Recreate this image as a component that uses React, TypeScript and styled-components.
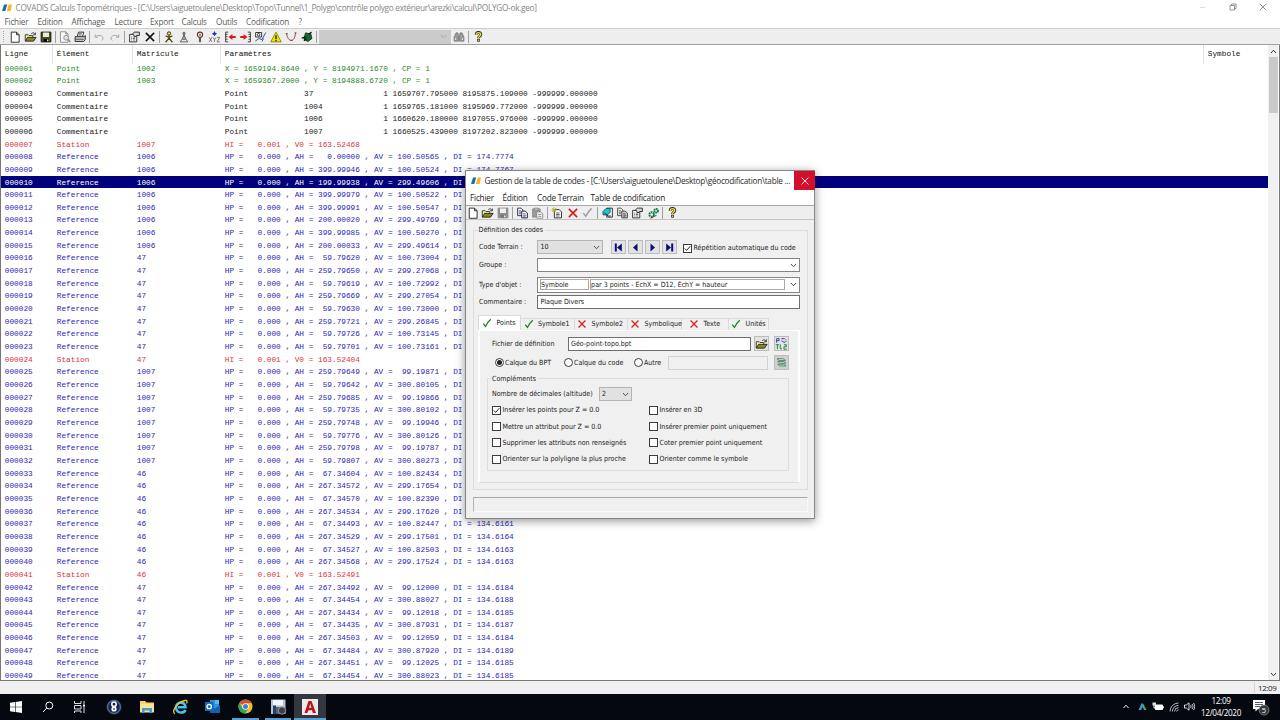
import React from "react";
import styled, { createGlobalStyle, css } from "styled-components";

const ui = `"Open Sans", "Noto Sans", sans-serif`;
const tahoma = `"DejaVu Sans Condensed", "DejaVu Sans", sans-serif`;

const GlobalStyle = createGlobalStyle`
  * { box-sizing: border-box; }
  body { margin: 0; background: #fff; overflow: hidden; }
  svg { display: block; flex: none; }
`;

const Screen = styled.div`
  width: 1280px;
  height: 720px;
  display: flex;
  flex-direction: column;
  position: relative;
  overflow: hidden;
  background: #fff;
  font-family: ${ui};
  white-space: nowrap;
`;

const TitleBar = styled.header`
  display: flex;
  align-items: center;
  height: 15px;
  padding-left: 2px;
  color: #858585;
  font-size: 8.3px;
`;
const TitleText = styled.span<{ $ls?: number }>`
  flex: 1;
  min-width: 0;
  padding-left: 3.5px;
  letter-spacing: ${(p) => p.$ls ?? 0}px;
`;
const WindowButtons = styled.div`
  display: flex;
  gap: 22px;
  padding-right: 13px;
  margin-top: -2px;
`;

const MenuBar = styled.nav<{ $dialog?: boolean }>`
  display: flex;
  align-items: center;
  gap: 9.5px;
  flex: none;
  height: ${(p) => (p.$dialog ? 15 : 13)}px;
  padding-left: ${(p) => (p.$dialog ? 4 : 4.5)}px;
  font-size: 8.2px;
  color: ${(p) => (p.$dialog ? "#222" : "#5a5a5a")};
  background: #fff;
`;
const MenuItem = styled.span<{ $w: number; $ls?: number }>`
  width: ${(p) => p.$w}px;
  letter-spacing: ${(p) => p.$ls ?? -0.2}px;
`;

const Toolbar = styled.div<{ $dialog?: boolean }>`
  display: flex;
  align-items: center;
  flex: none;
  height: ${(p) => (p.$dialog ? 15 : 17)}px;
  padding-left: ${(p) => (p.$dialog ? 0 : 3)}px;
  background: #eeeeee;
  border-top: 1px solid ${(p) => (p.$dialog ? "#a8a8a8" : "#cfcfcf")};
  border-bottom: 1px solid ${(p) => (p.$dialog ? "#c4c4c4" : "#a0a0a0")};
  ${(p) => p.$dialog && css`> :first-child { margin-left: -1px; }`}
`;
const Gripper = styled.span`
  width: 1px;
  height: 11px;
  margin-right: 3.3px;
  border-left: 1px dotted #aaa;
`;
const ToolCell = styled.span`
  width: 15.3px;
  display: flex;
  justify-content: center;
`;
const ToolSep = styled.span`
  width: 4.1px;
  height: 12px;
  display: flex;
  justify-content: center;
  &::before { content: ""; width: 1px; background: #a0a0a0; }
`;
const ToolCombo = styled.span`
  width: 132.5px;
  height: 14px;
  margin-left: 0.5px;
  display: flex;
  align-items: center;
  justify-content: flex-end;
  padding-right: 4px;
  background: #cbcbcb;
`;

const ListArea = styled.main`
  flex: 1;
  display: flex;
  min-height: 0;
  border-left: 1px solid #777;
  border-right: 1px solid #777;
  border-bottom: 1px solid #777;
`;
const ListTable = styled.div`
  flex: 1;
  overflow: hidden;
  font-family: "Liberation Mono", "Courier New", monospace;
  font-size: 7.78px;
`;
const lineGrid = css`
  display: grid;
  grid-template-columns: 52px 80px 88px 983px 1fr;
`;
const HeaderRow = styled.div`
  ${lineGrid}
  height: 16.6px;
  color: #111;
`;
const HeaderCell = styled.span`
  padding-left: 3.8px;
  line-height: 18.6px;
  border-right: 1px solid #e2e2e2;
  &:last-child { border-right: none; }
`;
type Kind = "point" | "comment" | "station" | "ref";
const kindColor: Record<Kind, string> = {
  point: "#2a8a2c",
  comment: "#222222",
  station: "#e0343c",
  ref: "#2c26bc",
};
const DataRow = styled.div<{ $kind: Kind; $selected: boolean }>`
  ${lineGrid}
  height: 12.667px;
  line-height: 14.2px;
  color: ${(p) => (p.$selected ? "#ffffff" : kindColor[p.$kind])};
  background: ${(p) => (p.$selected ? "#00007c" : "transparent")};
`;
const DataCell = styled.span`
  padding-left: 3.8px;
  white-space: pre;
`;

const ScrollTrack = styled.div`
  width: 10px;
  margin-right: 1px;
  background: #f0f0f0;
  display: flex;
  flex-direction: column;
  align-items: center;
`;
const ScrollArrow = styled.span`
  height: 12px;
  display: flex;
  align-items: center;
`;
const ScrollThumb = styled.span`
  width: 9px;
  height: 56px;
  margin-bottom: auto;
  background: #cacaca;
`;

const StatusBar = styled.footer`
  flex: none;
  height: 12.5px;
  display: flex;
  justify-content: flex-end;
  align-items: center;
  background: #f0f0f0;
  font-size: 8px;
  color: #222;
`;
const StatusClock = styled.span`
  width: 26px;
  padding-left: 3px;
  border-left: 1px solid #d5d5d5;
  letter-spacing: -0.4px;
  line-height: 11px;
`;

const Taskbar = styled.div`
  flex: none;
  height: 26.5px;
  display: flex;
  background: #05080f;
  color: #fff;
`;
const TaskItem = styled.div<{ $running?: boolean; $active?: boolean; $w?: number }>`
  width: ${(p) => p.$w ?? 32.7}px;
  display: flex;
  align-items: center;
  justify-content: center;
  background: ${(p) => (p.$active ? "#33373f" : "transparent")};
  ${(p) =>
    (p.$running || p.$active) &&
    css`
      border-bottom: 2px solid #5a9fd0;
      padding-top: 2px;
    `}
  ${(p) => p.$running && !p.$active && css`margin: 0 3px; width: 26.7px;`}
`;
const Tray = styled.div`
  margin-left: auto;
  display: flex;
  align-items: center;
`;
const TrayCell = styled.span<{ $w: number }>`
  width: ${(p) => p.$w}px;
  display: flex;
  justify-content: center;
`;
const TrayClock = styled.div`
  width: 48px;
  text-align: center;
  font-size: 8.2px;
  line-height: 12px;
  letter-spacing: -0.35px;
`;

/* ---- dialog ---- */
const Dialog = styled.section`
  position: absolute;
  left: 465px;
  top: 170px;
  width: 350px;
  height: 348.5px;
  display: flex;
  flex-direction: column;
  background: #f0f0f0;
  border: 1px solid #858585;
  border-right-color: #8a8a8a;
  box-shadow: 0 2px 9px rgba(0, 0, 0, 0.42);
  color: #1c1c1c;
`;
const DialogTitle = styled.header`
  flex: none;
  height: 19px;
  display: flex;
  align-items: center;
  padding-left: 5px;
  background: #fff;
  font-size: 8.2px;
  color: #2a2a2a;
`;
const CloseButton = styled.span`
  flex: none;
  width: 21px;
  height: 19px;
  margin-right: -1px;
  display: flex;
  align-items: center;
  justify-content: center;
  background: #d2102c;
`;
const Body = styled.div`
  flex: 1;
  padding: 9.5px 6px 0 7px;
  font-family: ${tahoma};
  font-size: 7.05px;
  line-height: 10px;
`;
const Group = styled.div<{ $h: number }>`
  height: ${(p) => p.$h}px;
  border: 1px solid #dcdcdc;
`;
const Rows = styled.div<{ $left: number; $shift?: number }>`
  display: flex;
  flex-direction: column;
  padding-left: ${(p) => p.$left}px;
  margin-top: ${(p) => p.$shift ?? 0}px;
`;
const Legend = styled.div`
  width: max-content;
  margin: -5.5px 0 0 3.5px;
  padding: 0 2px 0 1px;
  height: 10px;
  background: #f0f0f0;
`;
const Row = styled.div<{ $h: number; $mt?: number }>`
  display: flex;
  align-items: center;
  height: ${(p) => p.$h}px;
  margin-top: ${(p) => p.$mt ?? 0}px;
`;
const Label = styled.label<{ $w?: number; $ls?: number }>`
  flex: none;
  width: ${(p) => (p.$w ? `${p.$w}px` : "auto")};
  letter-spacing: ${(p) => p.$ls ?? 0}px;
`;
const Select = styled.span<{ $w: number; $grey?: boolean }>`
  flex: none;
  width: ${(p) => p.$w}px;
  height: 14px;
  display: flex;
  align-items: center;
  justify-content: space-between;
  padding: 0 2px 0 2.5px;
  background: ${(p) => (p.$grey ? "#e1e1e1" : "#fff")};
  border: 1px solid ${(p) => (p.$grey ? "#b4b4b4" : "#858585")};
`;
const TypeCombo = styled.span`
  width: 262.5px;
  height: 16px;
  display: flex;
  align-items: center;
  gap: 1.5px;
  padding: 0 2px;
  background: #fff;
  border: 1px solid #858585;
`;
const TypePart = styled.span<{ $w: number }>`
  width: ${(p) => p.$w}px;
  height: 11px;
  line-height: 9px;
  border: 1px solid #a9a9a9;
`;
const TextInput = styled.span<{ $w: number; $off?: boolean }>`
  flex: none;
  width: ${(p) => p.$w}px;
  height: 14px;
  padding-left: 2.5px;
  line-height: 12px;
  background: ${(p) => (p.$off ? "#f0f0f0" : "#fff")};
  border: 1px solid ${(p) => (p.$off ? "#d2d2d2" : "#6f6f6f")};
`;
const SmallButton = styled.span<{ $ml: number; $dark?: boolean }>`
  flex: none;
  width: 15px;
  height: 14.5px;
  margin-left: ${(p) => p.$ml}px;
  display: flex;
  align-items: center;
  justify-content: center;
  background: ${(p) => (p.$dark ? "#cfcfcf" : "#e3e3e3")};
  border: 1px solid ${(p) => (p.$dark ? "#bdbdbd" : "#bcbcbc")};
`;
const Box = styled.span`
  flex: none;
  width: 9px;
  height: 9px;
  margin-right: 1.5px;
  display: flex;
  align-items: center;
  justify-content: center;
  border: 1px solid #3c3c3c;
  background: #fff;
`;
const Radio = styled(Box)<{ $on?: boolean }>`
  border-radius: 50%;
  &::before {
    content: "";
    width: 5px;
    height: 5px;
    border-radius: 50%;
    background: ${(p) => (p.$on ? "#222" : "transparent")};
  }
`;
const TabStrip = styled.div`
  display: flex;
  align-items: flex-end;
  height: 15px;
`;
const Tab = styled.div<{ $w: number; $pl: number; $gap: number; $active?: boolean }>`
  flex: none;
  width: ${(p) => p.$w}px;
  height: ${(p) => (p.$active ? 15 : 12.5)}px;
  padding-left: ${(p) => p.$pl}px;
  display: flex;
  align-items: center;
  gap: ${(p) => p.$gap}px;
  background: ${(p) => (p.$active ? "#fff" : "#f0f0f0")};
  border: 1px solid #dadada;
  border-bottom: none;
  border-left-width: ${(p) => (p.$active ? 1 : 0)}px;
`;
const TabPanel = styled.div`
  width: 322px;
  height: 153px;
  padding: 5px 9px 0 7px;
  border: 1px solid #dcdcdc;
  border-left: 2px solid #fff;
  border-right: 2px solid #fff;
  border-top: 1px solid #fff;
`;
const CheckGrid = styled.div`
  display: grid;
  grid-template-columns: 157px 1fr;
  grid-auto-rows: 16.25px;
  margin-top: 1px;
`;
const Check = styled.span`
  display: flex;
  align-items: center;
`;
const MessageStrip = styled.div`
  height: 15px;
  margin-top: 7px;
  border: 1px solid #fafafa;
  border-top-color: #a8a8a8;
  border-left-color: #b4b4b4;
`;

/* ---- icons ---- */
const Ico = ({ children, w = 12, h = 12, vb = "0 0 16 16" }: { children: React.ReactNode; w?: number; h?: number; vb?: string }) => (
  <svg width={w} height={h} viewBox={vb} fill="none" stroke="#222" strokeWidth="1.2">
    {children}
  </svg>
);
const AppLogo = () => (
  <svg width="10" height="8" viewBox="0 0 10 8">
    <path d="M2 0.5h3.3L3.3 7H0z" fill="#1a6fb4" />
    <path d="M6.800 0.500H10L8.600 7H4.800z" fill="#f4b81d" />
  </svg>
);
const Chevron = ({ up = false, c = "#555", w = 7 }: { up?: boolean; c?: string; w?: number }) => (
  <svg width={w} height="5" viewBox="0 0 7 5" fill="none" stroke={c} strokeWidth="1">
    <path d={up ? "M1 4L3.5 1.2L6 4" : "M1 1L3.5 3.8L6 1"} />
  </svg>
);
const NewIcon = () => (
  <Ico><path d="M3 1.5h7l3.5 3.5v10H3z" fill="#fff" /><path d="M10 1.5V5h3.5" /></Ico>
);
const OpenIcon = () => (
  <Ico w={13}>
    <path d="M1 13V5h4l1 1h5v3" fill="#f6ef9a" stroke="#333" />
    <path d="M1 13.5L4 8.5h11.5L12 13.5z" fill="#8b8b1c" stroke="#222" />
    <path d="M9 3.5c2-2 4-1 4.7.8M14.5 2v3h-3" strokeWidth="1.1" />
  </Ico>
);
const SaveIcon = ({ off = false }: { off?: boolean }) => (
  <Ico>
    <path d="M1.5 1.5h13v13h-13z" fill={off ? "#8c8c8c" : "#4e520f"} stroke={off ? "#8c8c8c" : "#111"} />
    <path d="M4 2h8v6H4z" fill={off ? "#f0f0f0" : "#e8e8e8"} stroke="none" />
    <path d="M5 10.5h7v4H5z" fill={off ? "#777" : "#000"} stroke="none" />
    <path d="M9.5 11.2h1.8v2.6H9.5z" fill="#fff" stroke="none" />
  </Ico>
);
const PreviewIcon = () => (
  <Ico><g stroke="#8c8c8c"><path d="M2 1h7l3 3v11H2z" fill="#f8f8f8" /><path d="M9 1v3h3" /><circle cx="9.5" cy="9" r="3.2" fill="#e4e4e4" /><path d="M12 11.5l3.2 3.2" strokeWidth="2" /></g></Ico>
);
const PrintIcon = () => (
  <Ico><path d="M4.5 7l1.500-5.500h7L11.500 7" fill="#fff" /><path d="M1.500 7.500h12.500l1-1.500v5.500l-2 2.500H1.500z" fill="#c9c9c9" /><path d="M2 11h11M6.500 3.700h4M6 5.400h4" strokeWidth="0.900" /></Ico>
);
const UndoIcon = ({ flip = false }: { flip?: boolean }) => (
  <Ico w={11} h={11}><g stroke="#a2a2a2" strokeWidth="1.3" transform={flip ? "translate(16 0) scale(-1 1)" : undefined}><path d="M2 8.500C5 6 10 5.500 12.500 8.500c1.500 2.300.3 4.500-1.500 5.200M1.800 5v4h4" /></g></Ico>
);
const PropsIcon = () => (
  <Ico w={13}><path d="M1.5 4.5h9.500v10H1.5z" fill="#fff" /><path d="M3.500 8h1.500M6 8h3M3.500 10h1.500M6 10h3M3.500 12h1.500M6 12h3" strokeWidth=".9" /><path d="M5.500 3.500L8 1.500h6.500v4.500H11L8.500 8z" fill="#d9d9d9" /></Ico>
);
const CrossIcon = ({ c = "#111", s = 12, sw = 2 }: { c?: string; s?: number; sw?: number }) => (
  <Ico w={s} h={s}><path d="M2.500 2.500L13.500 13.500M13.500 2.500L2.500 13.500" stroke={c} strokeWidth={sw} /></Ico>
);
const ManIcon = () => (
  <Ico><circle cx="8" cy="3.300" r="2.200" fill="#f2e93b" /><path d="M8 5.500v4L3.500 15M8 9.500L12.500 15M3.500 6.500L8 8.500l4.500-2" stroke="#4b4a00" strokeWidth="1.700" /></Ico>
);
const StationIcon = () => (
  <Ico><path d="M8 3v8M5.500 11l-2.500 3.500h10L10.500 11zM8 5.500L5 11M8 5.500L11 11" stroke="#555" /><circle cx="8" cy="3.200" r="1.500" fill="#999" stroke="#555" /></Ico>
);
const PinIcon = () => (
  <Ico><circle cx="8" cy="5" r="3.500" fill="#fff" stroke="#5c3434" strokeWidth="1.400" /><path d="M6.500 5h3M8 3.500v3" stroke="#d82626" /><path d="M7.300 8.500v6h1.400v-6" stroke="#444" /></Ico>
);
const XyzIcon = () => (
  <Ico w={13}><circle cx="8" cy="3.500" r="2" fill="#1c2cc8" stroke="none" /><path d="M8 0.500v6M5 3.500h6" stroke="#1c2cc8" /><path d="M1 8.500l3.500 6M4.500 8.500L1 14.500M6 8.500l2 3 2-3M8 11.500v3M11.500 8.500H15l-3.500 6H15" stroke="#555" strokeWidth="1" /></Ico>
);
const RedArrowIcon = ({ right = false }: { right?: boolean }) => (
  <Ico w={13}><g transform={right ? "translate(16 0) scale(-1 1)" : undefined}><path d="M5 1.500H1.500v13H5M1.500 4.500H4M1.500 7.500H4M1.500 11H4" stroke="#333" /><path d="M5.500 8l5-4v2.700h4.500v2.600h-4.500V12z" fill="#e01818" stroke="none" /></g></Ico>
);
const MapIcon = () => (
  <Ico w={13}><path d="M1.500 2h8v6h-8z" fill="#fff" /><circle cx="5.500" cy="5" r="1.700" /><path d="M1 13.500l5-3.500 4 1.500L15 2M10 14l2-4" stroke="#33469c" /></Ico>
);
const WarnIcon = () => (
  <Ico><path d="M8 1.500L15 14.500H1z" fill="#f5e400" stroke="#8b8200" /><path d="M8 5.500v5M8 11.800v1.700" strokeWidth="1.800" /></Ico>
);
const CurveIcon = () => (
  <Ico><path d="M2 3c1 7 4 9.500 6.500 9.500S13.500 9 14 2.500" stroke="#a33b3b" strokeWidth="1.300" /><path d="M1 3.500h2.500M12.800 2.500h2.500M7 12.500h3" stroke="#444" /></Ico>
);
const GreenIcon = () => (
  <Ico><path d="M6 2.500l7 1.500 1.500 6-5.500 4-5-3z" fill="#12662f" stroke="#0a2e16" /><path d="M1 9.500l5-1.500M4 13l3-3M11 4l3-2.500" stroke="#111" strokeWidth="1.800" /></Ico>
);
const BinocIcon = () => (
  <Ico><g fill="#9a9a9a" stroke="#7e7e7e"><path d="M4 2.500h2.500l.8 4v7H1.500V8z" /><path d="M12 2.500H9.500l-.8 4v7h5.800V8z" /><path d="M3.500 9.500v2.500M12.500 9.500v2.500" stroke="#eee" /></g></Ico>
);
const HelpIcon = () => (
  <Ico w={11} h={11}><path d="M4.500 5.500C4.500 1 11.500 1 11.500 5c0 2.500-3.500 2.500-3.500 5.500" stroke="#222" strokeWidth="4" /><path d="M6 11.500h4v4H6z" fill="#222" stroke="none" /><path d="M4.700 5.300C4.700 1.500 11.300 1.500 11.300 5c0 2.300-3.300 2.500-3.300 5" stroke="#efe23a" strokeWidth="2" /><path d="M7 12.300h2v2.200H7z" fill="#efe23a" stroke="none" /></Ico>
);
const CopyIcon = ({ hatch = false }: { hatch?: boolean }) => (
  <Ico w={13}><path d="M1.500 1.500H6l2.500 2.500v7.500h-7z" fill="#fff" stroke={hatch ? "#444" : "#222255"} /><path d="M3 5h3M3 7h4M3 9h3" strokeWidth=".9" /><path d="M7 5.500h4.500L14.500 8v6.500H7z" fill={hatch ? "#ccc" : "#fff"} stroke={hatch ? "#444" : "#111144"} /><path d="M9 9h3M9 11h4M9 13h3" strokeWidth=".9" /></Ico>
);
const PasteIcon = () => (
  <Ico w={13}><path d="M1.500 2.500h10v11h-10z" fill="#9b9b9b" stroke="#8a8a8a" /><path d="M4 1.500h5v2.500H4z" fill="#ddd" stroke="#8a8a8a" /><path d="M7 6.500h5L15 9v6H7z" fill="#f4f4f4" stroke="#8a8a8a" /><path d="M9 10h4M9 12.500h4" stroke="#8a8a8a" /></Ico>
);
const NewItemIcon = () => (
  <Ico><path d="M4.500 3.500h6.500L14 6.500v8H4.500z" fill="#fff" /><path d="M6.500 8h5M6.500 10h5M6.500 12h5" strokeWidth=".9" /><path d="M4 0.500v7M0.500 4h7M1.500 1.500l5 5M6.500 1.500l-5 5" stroke="#b5ac16" strokeWidth="1.100" /></Ico>
);
const CheckIcon = ({ c = "#16801e", w = 11 }: { c?: string; w?: number }) => (
  <Ico w={w} h={w}><path d="M2 9l3.500 4.500C8 8.500 10.500 5 14 2" stroke={c} strokeWidth="2" /></Ico>
);
const CyanIcon = () => (
  <Ico w={13}><path d="M7 1.500h7.500v12H7z" fill="#fff" /><path d="M2 6l4-4h5.500v5L8 10.500H2z" fill="#1fc4cc" stroke="#075d66" /><path d="M8.500 12h4M4 8l5 4" /></Ico>
);
const GearsIcon = () => (
  <Ico w={13}><circle cx="5.500" cy="10" r="3" fill="#fff" stroke="#0f7848" strokeWidth="2.600" strokeDasharray="2.200 .7" /><circle cx="11.500" cy="5" r="2.400" fill="#fff" stroke="#0f7848" strokeWidth="2.600" strokeDasharray="1.900 .6" /><path d="M4 15l8-4" stroke="#333" /></Ico>
);
const NavIcon = ({ bar = false, flip = false }: { bar?: boolean; flip?: boolean }) => (
  <svg width="9" height="9" viewBox="0 0 9 9" fill="#0b0b7c">
    <g transform={flip ? "translate(9 0) scale(-1 1)" : undefined}>
      {bar && <path d="M0.800 0.500h2v8h-2z" />}
      <path d={bar ? "M7.800 0.500v8L3 4.500z" : "M6.500 0.500v8L2 4.500z"} />
    </g>
  </svg>
);
const Tick = () => (
  <svg width="7" height="7" viewBox="0 0 7 7" fill="none" stroke="#222" strokeWidth="1"><path d="M0.800 3.500L2.600 5.400L6.300 1.200" /></svg>
);
const TlIcon = () => (
  <Ico w={13} h={13}><path d="M2 7V2h3v2.500H2M8 2h4M8 4.500l3 2h1.500" stroke="#3a3ab8" /><path d="M1 9.500h4M3 9.500V15M6.500 9v5.500h2M11 9.500h3v2.500h-3v3h3.500" stroke="#1d8a3a" /><path d="M13.500 3v4" stroke="#2e2ea8" strokeDasharray="1 1" /></Ico>
);
const LayersIcon = () => (
  <Ico w={11} h={11}><g stroke="#3d7a55" fill="#dfe9e2"><path d="M1.500 2.500h9l3 2.500h-9z" /><path d="M2.500 6.500h9l3 2.500h-9z" /><path d="M2.500 10.500h9l3 2.500h-9z" /></g></Ico>
);

/* ---- data ---- */
type Line = { kind: Kind; element: string; id: string; text: string };
const point = (id: string, x: string, y: string): Line => ({ kind: "point", element: "Point", id, text: `X = ${x} , Y = ${y} , CP = 1` });
const comment = (n: string, x: string, y: string): Line => ({
  kind: "comment", element: "Commentaire", id: "",
  text: `${"Point".padEnd(17)}${n.padEnd(17)}1 ${x} ${y} -999999.000000`,
});
const station = (id: string, v0: string): Line => ({ kind: "station", element: "Station", id, text: `HI =   0.001 , V0 = ${v0}` });
const refs = (id: string, rows: string[]): Line[] =>
  rows.map((r) => {
    const [ah, av, di] = r.split(" ");
    const tail = di ? ` , DI = ${di}` : " , DI";
    return { kind: "ref", element: "Reference", id, text: `HP =   0.000 , AH = ${ah.padStart(9)} , AV = ${av.padStart(9)}${tail}` };
  });

const lines: Line[] = [
  point("1002", "1659194.8640", "8194971.1670"),
  point("1003", "1659367.2000", "8194888.6720"),
  comment("37", "1659707.795000", "8195875.109000"),
  comment("1004", "1659765.181000", "8195969.772000"),
  comment("1006", "1660620.180000", "8197055.976000"),
  comment("1007", "1660525.439000", "8197202.823000"),
  station("1007", "163.52468"),
  ...refs("1006", [
    "0.00000 100.50565 174.7774", "399.99946 100.50524 174.7767", "199.99938 299.49606", "399.99979 100.50522",
    "399.99991 100.50547", "200.00020 299.49769", "399.99985 100.50270", "200.00033 299.49614",
  ]),
  ...refs("47", [
    "59.79620 100.73004", "259.79650 299.27068", "59.79619 100.72992", "259.79669 299.27054",
    "59.79630 100.73000", "259.79721 299.26845", "59.79726 100.73145", "59.79701 100.73161",
  ]),
  station("47", "163.52404"),
  ...refs("1007", [
    "259.79649 99.19871", "59.79642 300.80105", "259.79685 99.19866", "59.79735 300.80102",
    "259.79748 99.19946", "59.79776 300.80126", "259.79798 99.19787", "59.79807 300.80273",
  ]),
  ...refs("46", [
    "67.34604 100.82434", "267.34572 299.17654", "67.34570 100.82390", "267.34534 299.17620",
    "67.34493 100.82447 134.6161", "267.34529 299.17501 134.6164", "67.34527 100.82503 134.6163", "267.34568 299.17524 134.6163",
  ]),
  station("46", "163.52491"),
  ...refs("47", [
    "267.34492 99.12000 134.6184", "67.34454 300.88027 134.6188", "267.34434 99.12018 134.6185", "67.34435 300.87931 134.6187",
    "267.34503 99.12059 134.6184", "67.34484 300.87920 134.6189", "267.34451 99.12025 134.6185", "67.34454 300.88023 134.6185",
  ]),
];

const mainMenu: [string, number][] = [
  ["Fichier", 23.5], ["Edition", 24.5], ["Affichage", 33.5], ["Lecture", 26], ["Export", 22],
  ["Calculs", 25], ["Outils", 20.5], ["Codification", 43], ["?", 5],
];
const dialogMenu: [string, number][] = [["Fichier", 23], ["Édition", 25], ["Code Terrain", 44], ["Table de codification", 76]];

const mainTools: (React.ReactNode | null)[] = [
  <NewIcon />, <OpenIcon />, <SaveIcon />, null, <PreviewIcon />, <PrintIcon />, null, <UndoIcon />, <UndoIcon flip />, null,
  <PropsIcon />, <CrossIcon />, null, <ManIcon />, <StationIcon />, <PinIcon />, <XyzIcon />, <RedArrowIcon />,
  <RedArrowIcon right />, <MapIcon />, <WarnIcon />, <CurveIcon />, <GreenIcon />, null,
];
const dialogTools: (React.ReactNode | null)[] = [
  <NewIcon />, <OpenIcon />, <SaveIcon off />, null, <CopyIcon />, <PasteIcon />, null, <NewItemIcon />, <CrossIcon c="#e01414" />,
  <CheckIcon c="#9a9a9a" />, null, <CyanIcon />, <CopyIcon hatch />, <PropsIcon />, <GearsIcon />, null, <HelpIcon />,
];
const Tools = ({ items }: { items: (React.ReactNode | null)[] }) => (
  <>{items.map((t, i) => (t ? <ToolCell key={i}>{t}</ToolCell> : <ToolSep key={i} />))}</>
);

const tabs: { name: string; ok: boolean; w: number; pl: number; gap: number }[] = [
  { name: "Points", ok: true, w: 43.5, pl: 3.5, gap: 4.5 },
  { name: "Symbole1", ok: true, w: 53.5, pl: 3, gap: 4 },
  { name: "Symbole2", ok: false, w: 53, pl: 2.5, gap: 4.5 },
  { name: "Symbolique", ok: false, w: 54, pl: 2.5, gap: 4.5 },
  { name: "Texte", ok: false, w: 47, pl: 7.5, gap: 4.5 },
  { name: "Unités", ok: true, w: 40, pl: 2, gap: 5 },
];
const checks: [string, boolean][] = [
  ["Insérer les points pour Z = 0.0", true], ["Insérer en 3D", false],
  ["Mettre un attribut pour Z = 0.0", false], ["Insérer premier point uniquement", false],
  ["Supprimer les attributs non renseignés", false], ["Coter premier point uniquement", false],
  ["Orienter sur la polyligne la plus proche", false], ["Orienter comme le symbole", false],
];

const CodesDialog = () => (
  <Dialog>
    <DialogTitle>
      <AppLogo />
      <TitleText $ls={-0.26}>Gestion de la table de codes - [C:\Users\aiguetoulene\Desktop\géocodification\table ...</TitleText>
      <CloseButton><CrossIcon c="#fff" s={10} sw={1.4} /></CloseButton>
    </DialogTitle>
    <MenuBar $dialog>{dialogMenu.map(([m, w]) => <MenuItem key={m} $w={w}>{m}</MenuItem>)}</MenuBar>
    <Toolbar $dialog><Tools items={dialogTools} /></Toolbar>
    <Body>
      <Group $h={260}>
        <Legend>Définition des codes</Legend>
        <Rows $left={5} $shift={4.5}>
          <Row $h={15}>
            <Label $w={58}>Code Terrain :</Label>
            <Select $w={65.5} $grey>10<Chevron /></Select>
            <SmallButton $ml={8}><NavIcon bar /></SmallButton>
            <SmallButton $ml={2}><NavIcon /></SmallButton>
            <SmallButton $ml={2}><NavIcon flip /></SmallButton>
            <SmallButton $ml={2}><NavIcon bar flip /></SmallButton>
            <Row $h={10} $mt={2}><Label $w={6.5} /><Box><Tick /></Box><Label>Répétition automatique du code</Label></Row>
          </Row>
          <Row $h={14} $mt={3.5}><Label $w={58}>Groupe :</Label><Select $w={262.5}><span /><Chevron /></Select></Row>
          <Row $h={16} $mt={4.5}>
            <Label $w={58}>Type d'objet :</Label>
            <TypeCombo>
              <TypePart $w={49}>Symbole</TypePart>
              <TypePart $w={196}>par 3 points - EchX = D12, EchY = hauteur</TypePart>
              <Label $w={2} />
              <Chevron />
            </TypeCombo>
          </Row>
          <Row $h={14} $mt={2.5}><Label $w={58}>Commentaire :</Label><TextInput $w={262.5}>Plaque Divers</TextInput></Row>
        </Rows>
        <Rows $left={3.5} $shift={6}>
          <TabStrip>
            {tabs.map((t, i) => (
              <Tab key={t.name} $w={t.w} $pl={t.pl} $gap={t.gap} $active={i === 0}>
                {t.ok ? <CheckIcon w={10} /> : <CrossIcon c="#dc1c1c" s={10} />}
                {t.name}
              </Tab>
            ))}
          </TabStrip>
          <TabPanel>
            <Rows $left={5.5}>
              <Row $h={15}>
                <Label $w={75.5}>Fichier de définition</Label>
                <TextInput $w={183}>Géo-point-topo.bpt</TextInput>
                <SmallButton $ml={3}><OpenIcon /></SmallButton>
                <SmallButton $ml={5.5}><TlIcon /></SmallButton>
              </Row>
              <Row $h={15} $mt={4}>
                <Label $w={2.5} /><Radio $on /><Label $w={58.5}>Calque du BPT</Label>
                <Radio /><Label $w={59.5}>Calque du code</Label>
                <Radio /><Label $w={24}>Autre</Label>
                <TextInput $w={99.5} $off />
                <SmallButton $ml={6.5} $dark><LayersIcon /></SmallButton>
              </Row>
            </Rows>
            <Row $h={8} />
            <Group $h={93}>
              <Legend>Compléments</Legend>
              <Rows $left={4.5} $shift={3.7}>
                <Row $h={14}><Label $w={106.5}>Nombre de décimales (altitude)</Label><Select $w={33.5} $grey>2<Chevron /></Select></Row>
                <CheckGrid>
                  {checks.map(([t, on]) => <Check key={t}><Box>{on && <Tick />}</Box>{t}</Check>)}
                </CheckGrid>
              </Rows>
            </Group>
          </TabPanel>
        </Rows>
      </Group>
      <MessageStrip />
    </Body>
  </Dialog>
);

export default function App() {
  return (
    <Screen>
      <GlobalStyle />
      <TitleBar>
        <AppLogo />
        <TitleText $ls={-0.31}>COVADIS Calculs Topométriques - [C:\Users\aiguetoulene\Desktop\Topo\Tunnel\1_Polygo\contrôle polygo extérieur\arezki\calcul\POLYGO-ok.geo]</TitleText>
        <WindowButtons>
          <svg width="8" height="8" viewBox="0 0 8 8"><path d="M1 4.500h5" stroke="#ddd" /></svg>
          <svg width="8" height="8" viewBox="0 0 8 8" fill="none" stroke="#888" strokeWidth="0.900"><path d="M1 2.500h4.500V7H1zM2.500 2.500V1H7v4.500H5.500" /></svg>
          <svg width="8" height="8" viewBox="0 0 8 8" fill="none" stroke="#888" strokeWidth="0.900"><path d="M0.800 0.800L7.200 7.200M7.200 0.800L0.800 7.200" /></svg>
        </WindowButtons>
      </TitleBar>
      <MenuBar>{mainMenu.map(([m, w]) => <MenuItem key={m} $w={w}>{m}</MenuItem>)}</MenuBar>
      <Toolbar>
        <Gripper />
        <Tools items={mainTools} />
        <ToolCombo><Chevron c="#aaa" /></ToolCombo>
        <ToolCell><BinocIcon /></ToolCell>
        <ToolSep />
        <ToolCell><HelpIcon /></ToolCell>
      </Toolbar>
      <ListArea>
        <ListTable>
          <HeaderRow>
            {["Ligne", "Élément", "Matricule", "Paramètres", "Symbole"].map((h) => <HeaderCell key={h}>{h}</HeaderCell>)}
          </HeaderRow>
          {lines.map((l, i) => (
            <DataRow key={i} $kind={l.kind} $selected={i === 9}>
              <DataCell>{String(i + 1).padStart(6, "0")}</DataCell>
              <DataCell>{l.element}</DataCell>
              <DataCell>{l.id}</DataCell>
              <DataCell>{l.text}</DataCell>
            </DataRow>
          ))}
        </ListTable>
        <ScrollTrack>
          <ScrollArrow><Chevron up c="#333" /></ScrollArrow>
          <ScrollThumb />
          <ScrollArrow><Chevron c="#333" /></ScrollArrow>
        </ScrollTrack>
      </ListArea>
      <StatusBar><StatusClock>12:09</StatusClock></StatusBar>
      <Taskbar>
        <TaskItem $w={32}>
          <svg width="12" height="12" viewBox="0 0 12 12" fill="#fff"><path d="M0 1.700l5-.7v4.700H0zM5.600 .9L12 0v5.700H5.600zM0 6.300h5V11l-5-.7zM5.600 6.300H12V12l-6.400-.9z" /></svg>
        </TaskItem>
        <TaskItem $w={32}>
          <svg width="12" height="12" viewBox="0 0 12 12" fill="none" stroke="#fff"><circle cx="7.300" cy="4.500" r="3.500" /><path d="M4.800 7L1 11" /></svg>
        </TaskItem>
        <TaskItem $w={32}>
          <svg width="12" height="12" viewBox="0 0 12 12" fill="none" stroke="#ddd"><path d="M0.500 0v2.500h6.500V0M0.500 4.500h6.500v3.500H0.500zM0.500 12V10h6.500v2M10 0v3M10 5.500V12" /><path d="M9 3.500h2v2H9z" fill="#fff" stroke="none" /></svg>
        </TaskItem>
        <TaskItem $w={35}>
          <svg width="16" height="16" viewBox="0 0 16 16"><circle cx="8" cy="8" r="7.500" fill="#2b4477" /><circle cx="8" cy="8" r="6.300" fill="#16274f" stroke="#8fa3c8" strokeWidth=".6" /><circle cx="8" cy="5.300" r="2.200" fill="none" stroke="#fff" strokeWidth="1.500" /><circle cx="8" cy="10" r="2.600" fill="#fff" /><circle cx="8" cy="10" r=".9" fill="#2b4477" /></svg>
        </TaskItem>
        <TaskItem>
          <svg width="16" height="14" viewBox="0 0 16 14"><path d="M1 1h5l1.500 1.500H15V12H1z" fill="#f5d36b" /><path d="M1 4h14v8.500H1z" fill="#fbe394" /><path d="M3 13V8h10v5h-2.500v-2.500h-5V13z" fill="#3f9ed6" /></svg>
        </TaskItem>
        <TaskItem>
          <svg width="17" height="16" viewBox="0 0 17 16" fill="none"><path d="M13.500 11C12 14.500 4.500 15 4 8.500C4 2 13.500 2 13.500 8.300H6" stroke="#45c0f0" strokeWidth="2.600" /><path d="M3 14.500C-1 14 4 3.500 13 1.500c2.500-.4 2.500 1.200 1.500 3" stroke="#f2c230" strokeWidth="1.300" /></svg>
        </TaskItem>
        <TaskItem>
          <svg width="17" height="15" viewBox="0 0 17 15"><path d="M6 1h9v10H6z" fill="#2a94dc" /><path d="M6 7l5 2.500L16 6v8H6z" fill="#1261ad" /><path d="M11 1h4v4h-4z" fill="#4fc0f0" /><path d="M1 3h8.500v9H1z" fill="#0f6cbd" /><circle cx="5.200" cy="7.500" r="2.200" fill="none" stroke="#fff" strokeWidth="1.300" /></svg>
        </TaskItem>
        <TaskItem $running>
          <svg width="15" height="15" viewBox="0 0 16 16"><circle cx="8" cy="8" r="7.500" fill="#e8c12e" /><path d="M8 8L1.500 4.200A7.500 7.500 0 0 1 14.500 4.200L8 4.500z" fill="#dc4b3a" /><path d="M1.500 4.200A7.500 7.500 0 0 0 7.500 15.500L11 10 5 9.500z" fill="#36a352" /><circle cx="8" cy="8" r="3.500" fill="#fff" /><circle cx="8" cy="8" r="2.700" fill="#3f7de0" /></svg>
        </TaskItem>
        <TaskItem $running>
          <svg width="17" height="16" viewBox="0 0 17 16"><path d="M1 .5h14.500V15H1z" fill="#b8c3da" /><path d="M3 1h10v5.500H3z" fill="#f2f4fa" /><path d="M3 6.500h3V15H3z" fill="#2a3c68" /><path d="M6 8h7v7H6z" fill="#56627c" /><circle cx="12" cy="11.500" r="3.700" fill="#3b3e45" stroke="#aaa" strokeWidth=".8" /></svg>
        </TaskItem>
        <TaskItem $active $w={32}>
          <svg width="16" height="16" viewBox="0 0 16 16"><path d="M0 0h16v16H0z" fill="#f1e9e9" /><path d="M2.500 14L6.500 2h3L14 14h-3.200l-.8-2.800H6.500L5.300 14zM7 8.800h2.500L8.200 4.800z" fill="#b5161f" /></svg>
        </TaskItem>
        <Tray>
          <TrayCell $w={16}><Chevron up c="#eee" w={10} /></TrayCell>
          <TrayCell $w={16}>
            <svg width="9" height="9" viewBox="0 0 9 9"><path d="M0.500 8L4 .8 5.500 3 3 8z" fill="#2aa6dc" /><path d="M5 1.500L8.500 8H6L4 4z" fill="#3fae7a" /></svg>
          </TrayCell>
          <TrayCell $w={16}>
            <svg width="12" height="9" viewBox="0 0 12 9"><path d="M3.500 3h7v4.500h-7z" fill="#fff" stroke="#fff" /><path d="M11 4.200h1v2h-1zM0.500 .5h3.500v3H0.500z" fill="#ddd" /><path d="M2 3v3h1.500" stroke="#fff" fill="none" /></svg>
          </TrayCell>
          <TrayCell $w={15}>
            <svg width="10" height="10" viewBox="0 0 10 10" fill="none" stroke="#ccc" strokeWidth=".9"><path d="M1 9.500A8.500 8.500 0 0 1 9.500 1M3.300 9.500A6.200 6.200 0 0 1 9.500 3.400M5.500 9.500A4 4 0 0 1 9.500 5.600M7.700 9.500A1.800 1.800 0 0 1 9.500 7.800" /></svg>
          </TrayCell>
          <TrayCell $w={16}>
            <svg width="11" height="9" viewBox="0 0 11 9" fill="none" stroke="#eee" strokeWidth=".9"><path d="M.5 3h1.800L5 .8v7.400L2.300 6H.5zM6.500 3c.8 1 .8 2 0 3M8 2c1.300 1.700 1.300 3.300 0 5M9.500 1c1.700 2.300 1.700 4.700 0 7" /></svg>
          </TrayCell>
          <TrayClock>12:09<br />12/04/2020</TrayClock>
          <TrayCell $w={32}>
            <svg width="18" height="18" viewBox="0 0 18 18"><path d="M1 2h12v9H6l-2.500 2.500V11H1z" fill="#fff" /><path d="M3 4.500h8M3 6.500h8M3 8.500h5" stroke="#333" strokeWidth=".8" /><circle cx="12" cy="12" r="5" fill="#32353c" stroke="#999" strokeWidth=".7" /><text x="12" y="14.800" textAnchor="middle" fontSize="7.500" fill="#fff" fontFamily="Open Sans, sans-serif">5</text></svg>
          </TrayCell>
          <TrayCell $w={3} />
        </Tray>
      </Taskbar>
      <CodesDialog />
    </Screen>
  );
}
